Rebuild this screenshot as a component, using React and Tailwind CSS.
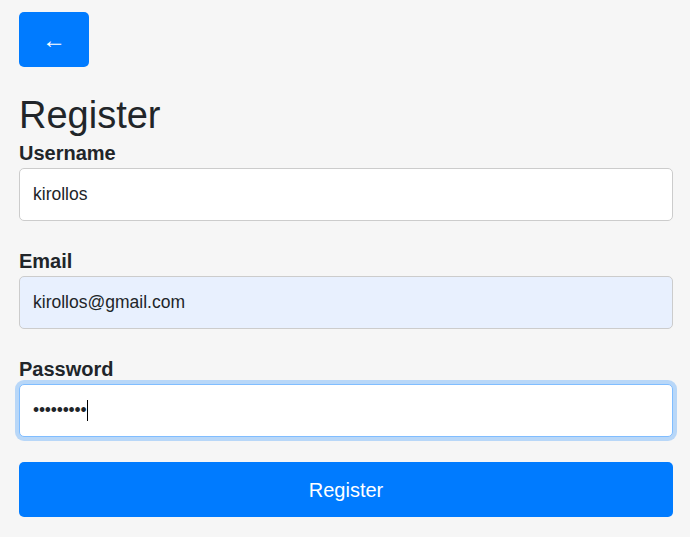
import { useState } from "react"

function Field({ label, value, className, children }) {
    return (
        <div className="mb-[28px]">
            <div className="mt-[3px] mb-[3px] text-[20px] leading-[24px] font-bold text-[#212529]">{label}</div>
            <div className={`h-[53px] flex items-center px-[13px] rounded-[5px] text-[17.5px] text-[#212529] ${className}`}>
                {children || value}
            </div>
        </div>
    )
}

export default function App() {
    const [user] = useState({ username: 'kirollos', email: 'kirollos@gmail.com' })

    return (
        <div className="min-h-[537px] bg-[#f6f6f6] pl-[19px] pr-[17px] pt-[12px] font-['Liberation_Sans',Arial,sans-serif]">
            <button className="w-[70px] h-[55px] rounded-[5px] bg-[#007bff] text-white text-[24px] flex items-center justify-center">
                ←
            </button>

            <h1 className="mt-[25px] text-[38px] leading-[46px] font-normal text-[#212529]">Register</h1>

            <Field label="Username" value={user.username} className="bg-white border border-[#cccccc]" />
            <Field label="Email" value={user.email} className="bg-[#e8f0fe] border border-[#cccccc]" />

            <div className="mb-[25px]">
                <div className="mt-[3px] mb-[3px] text-[20px] leading-[24px] font-bold text-[#212529]">Password</div>
                <div className="h-[53px] flex items-center px-[13px] rounded-[5px] text-[17.5px] text-[#212529] bg-white border border-[#80bdff] shadow-[0_0_0_4px_rgba(0,123,255,0.25)]">
                    <span className="tracking-[-0.2px]">•••••••••</span>
                    <span className="ml-[1px] w-px h-[21px] bg-black" />
                </div>
            </div>

            <button className="w-full h-[55px] rounded-[5px] bg-[#007bff] text-white text-[20px]">
                Register
            </button>
        </div>
    )
}
